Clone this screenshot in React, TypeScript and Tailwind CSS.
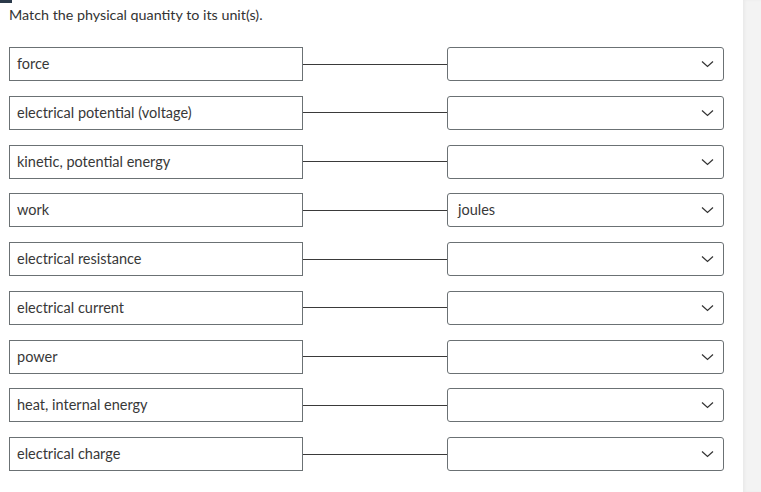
import React from "react";

const rows: { label: string; value: string }[] = [
  { label: "force", value: "" },
  { label: "electrical potential (voltage)", value: "" },
  { label: "kinetic, potential energy", value: "" },
  { label: "work", value: "joules" },
  { label: "electrical resistance", value: "" },
  { label: "electrical current", value: "" },
  { label: "power", value: "" },
  { label: "heat, internal energy", value: "" },
  { label: "electrical charge", value: "" },
];

function Chevron() {
  return (
    <svg width="13" height="8" viewBox="0 0 13 8" fill="none">
      <path d="M1 1.5 L6.5 6.5 L12 1.5" stroke="#333" strokeWidth="1.2" />
    </svg>
  );
}

export default function App() {
  return (
    <div
      className="flex w-[761px] h-[492px] bg-white overflow-hidden"
      style={{ fontFamily: "Lato, 'Open Sans', sans-serif" }}
    >
      <div className="relative w-[743px] h-full pl-[9px]">
        <div className="absolute left-0 top-0 w-[12px] h-[3px] bg-[#2b3a4a]" />
        <div className="pt-[5px] text-[14.3px] leading-[20px] text-[#333]">
          Match the physical quantity to its unit(s).
        </div>
        <div className="mt-[22px] flex flex-col gap-[14.75px]">
          {rows.map((r, i) => (
            <div key={i} className="flex items-center h-[34px]">
              <div className="w-[294px] h-[34px] border border-[#6b7174] flex items-center pl-[7px] text-[14.5px] text-[#383838]">
                {r.label}
              </div>
              <div className="w-[144px] h-px bg-[#3a3a3a]" />
              <div className="w-[277px] h-[34px] border border-[#6b7174] rounded-[3px] flex items-center justify-between pl-[10px] pr-[9px] text-[14.5px] text-[#383838]">
                <span>{r.value}</span>
                <Chevron />
              </div>
            </div>
          ))}
        </div>
      </div>
      <div className="w-[18px] h-full bg-[#f3f3f3] shadow-[inset_2px_0_3px_rgba(0,0,0,0.04)]" />
    </div>
  );
}
